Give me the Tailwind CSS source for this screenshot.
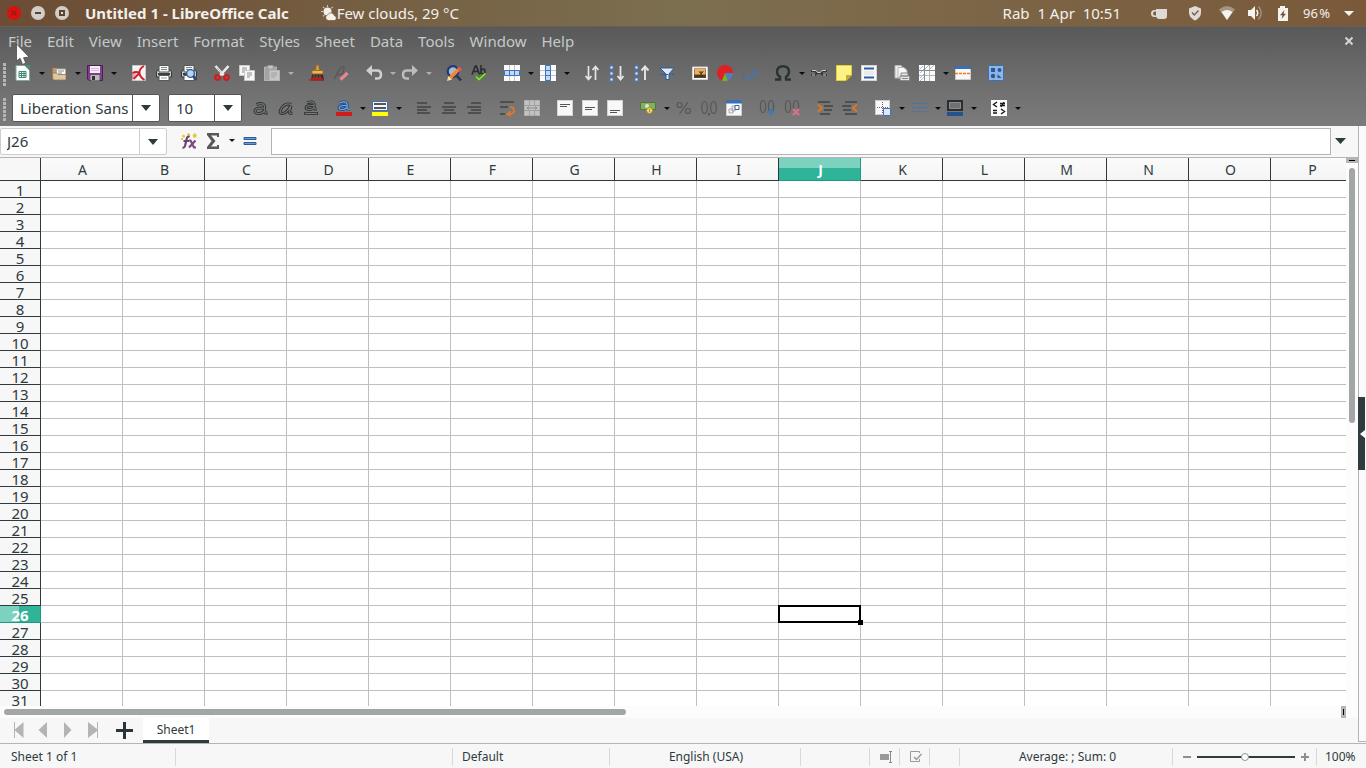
<!DOCTYPE html>
<html lang="en">
<head>
<meta charset="utf-8">
<title>Untitled 1 - LibreOffice Calc</title>
<script src="https://cdn.jsdelivr.net/npm/@tailwindcss/browser@4"></script>
</head>
<body class="flex h-screen flex-col overflow-hidden bg-[#f7f7f7] font-['Noto_Sans',sans-serif] text-[15px] text-[#2e3a3d]">

<header class="flex h-[27px] shrink-0 items-center justify-between border-b border-[#6a5f52] bg-linear-to-r from-[#6c4c34] via-[#7c6f50] to-[#7a593a] text-[#f3f0ec]">
  <div class="flex items-center">
    <div class="flex gap-2.5 pl-[7px]">
      <button aria-label="Close window" class="flex size-3.5"><svg class="size-3.5" viewBox="0 0 14 14"><circle cx="7" cy="7" r="7" fill="#d8120f"/><path d="M4.500 4.500l5 5M9.500 4.500l-5 5" stroke="#a01813" stroke-width="1.600"/></svg></button>
      <button aria-label="Minimize window" class="flex size-3.5"><svg class="size-3.5" viewBox="0 0 14 14"><circle cx="7" cy="7" r="7" fill="#d3cdc7"/><path d="M4 7h6" stroke="#5b4433" stroke-width="2"/></svg></button>
      <button aria-label="Restore window" class="flex size-3.5"><svg class="size-3.5" viewBox="0 0 14 14"><circle cx="7" cy="7" r="7" fill="#d3cdc7"/><rect x="4" y="4" width="6" height="6" fill="#5b4433"/><rect x="6" y="6" width="2" height="2" fill="#e8e4df"/></svg></button>
    </div>
    <h1 class="pl-4 text-[15px] leading-5 font-bold">Untitled 1 - LibreOffice Calc</h1>
    <div class="flex items-center pl-8">
      <svg class="size-4" viewBox="0 0 16 16" fill="#f3f0ec"><circle cx="6.500" cy="6.500" r="4"/><path d="M6 0h1v2H6zM0 6h2v1H0zM1.500 2.200l.8-.8 1.400 1.400-.8.8zM10 3l1.500-1.500.8.8L10.800 3.800zM1.500 11l1.500-1.500.8.8-1.500 1.500z" opacity=".7"/><path d="M7.500 15.500a3 3 0 01-.6-5.900 3.600 3.600 0 016.600 1.200 2.400 2.400 0 01-.1 4.700z" stroke="#7a573c" stroke-width=".7"/></svg>
      <span class="leading-5">Few clouds, 29 °C</span>
    </div>
  </div>
  <div class="flex items-center">
    <time class="pr-[30px] leading-5 whitespace-pre">Rab  1 Apr  10:51</time>
    <svg class="mr-5 h-4 w-4" viewBox="0 0 16 16"><path d="M5 4h11v7q0 3-3 3H8q-2 0-2.700-2H3.500Q0 12 0 8.500T3.500 5H5zM5 6.500H4q-2 0-2 2t2 2h1z" fill="#dedad5" fill-rule="evenodd"/></svg>
    <svg class="mr-4 h-4 w-4" viewBox="0 0 16 16"><path d="M8 1l6 2.500v4C14 11.500 11 14 8 15.500 5 14 2 11.500 2 7.500v-4z" fill="#dedad5"/><path d="M5 7.500L7.300 10 11.500 5.500" fill="none" stroke="#765c42" stroke-width="1.300"/></svg>
    <svg class="mr-3 h-4 w-4" viewBox="0 0 16 16"><path d="M0 4.500Q8-2.500 16 4.500L8 15z" fill="#a79480"/><path d="M2.500 7Q8 3 13.500 7L8 15z" fill="#f5f3f0"/></svg>
    <svg class="mr-3 h-4 w-4" viewBox="0 0 16 16"><path d="M1 5h3l4-4v14l-4-4H1z" fill="#f5f3f0"/><path d="M9.500 5q2.500 3 0 6" fill="none" stroke="#f5f3f0" stroke-width="1.500"/><path d="M11.500 1.500q5.500 6.500 0 13" fill="none" stroke="#a79480" stroke-width="1.300"/></svg>
    <svg class="mr-3 h-4 w-4" viewBox="0 0 16 16"><path d="M5 1h5v2h3v13H3V3h2z" fill="#f5f3f0"/><path d="M9.500 5L5 10.300h2.500L6.500 14 11 8.700H8.500z" fill="#6f4f33"/></svg>
    <span class="pr-3.5 text-[13px] leading-5">96&#8202;%</span>
    <svg class="mr-3 h-4 w-2.5" viewBox="0 0 10 16"><path d="M0 6h10l-5 5z" fill="#f5f3f0"/></svg>
  </div>
</header>

<section class="shrink-0 bg-linear-to-b from-[#595959] via-[#6c6c6c] to-[#7b7b7b]">
  <nav aria-label="Menu bar" class="flex h-[29px] items-start justify-between pt-1 text-[#c4cac9]">
    <div class="flex gap-[15px] pl-2 leading-5">
      <a href="#">File</a><a href="#">Edit</a><a href="#">View</a><a href="#">Insert</a><a href="#">Format</a><a href="#">Styles</a><a href="#">Sheet</a><a href="#">Data</a><a href="#">Tools</a><a href="#">Window</a><a href="#">Help</a>
    </div>
    <button aria-label="Close document" class="mt-[5px] mr-3"><svg class="size-2.5" viewBox="0 0 10 10"><path d="M1.500 1.500l7 7M8.500 1.500l-7 7" stroke="#d0d6d5" stroke-width="2"/></svg></button>
  </nav>
  <div role="toolbar" aria-label="Standard" class="flex h-[35px] items-start overflow-hidden">
    <svg class="mt-[7px] mr-1 h-6 w-[7px] shrink-0" viewBox="0 0 7 24"><path d="M4.500 0v24" stroke="#b6b6b6" stroke-width="3" stroke-dasharray="3 1"/></svg>
    <div id="standard" class="flex items-start"></div>
  </div>
  <div role="toolbar" aria-label="Formatting" class="flex h-[35px] items-start overflow-hidden">
    <svg class="mt-[7px] mr-[5px] h-6 w-[7px] shrink-0" viewBox="0 0 7 24"><path d="M4.500 0v24" stroke="#b6b6b6" stroke-width="3" stroke-dasharray="3 1"/></svg>
    <div class="mt-[3px] flex h-7 w-[148px] shrink-0 rounded-xs border border-[#555] bg-white">
      <input aria-label="Font name" value="Liberation Sans" class="w-[119px] min-w-0 pl-[7px] outline-none">
      <button aria-label="Choose font" class="flex flex-1 items-center justify-center border-l border-[#555]"><svg class="h-1.5 w-2.5" viewBox="0 0 10 6"><path d="M0 0h10L5 6z" fill="#2e3a3d"/></svg></button>
    </div>
    <div class="mt-[3px] mr-[7px] ml-2 flex h-7 w-[74px] shrink-0 rounded-xs border border-[#555] bg-white">
      <input aria-label="Font size" value="10" class="w-[45px] min-w-0 pl-[7px] outline-none">
      <button aria-label="Choose font size" class="flex flex-1 items-center justify-center border-l border-[#555]"><svg class="h-1.5 w-2.5" viewBox="0 0 10 6"><path d="M0 0h10L5 6z" fill="#2e3a3d"/></svg></button>
    </div>
    <div id="formatting" class="flex items-start"></div>
  </div>
</section>

<main class="flex min-h-0 flex-1">
  <div class="flex min-w-0 flex-1 flex-col">
    <div class="flex h-8 shrink-0 items-start border-b border-[#b4b4b4] bg-[#f7f7f7] pt-0.5">
      <div class="flex h-[27px] w-[167px] shrink-0 rounded-xs border border-[#cdcdcd] bg-white">
        <input aria-label="Name box" value="J26" class="w-[138px] min-w-0 pl-1.5 outline-none">
        <button aria-label="Name list" class="flex flex-1 items-center justify-center border-l border-[#cdcdcd]"><svg class="h-1.5 w-2.5" viewBox="0 0 10 6"><path d="M0 0h10L5 6z" fill="#2e3a3d"/></svg></button>
      </div>
      <button aria-label="Function wizard" class="mt-[5px] ml-3.5"><svg class="size-4" viewBox="0 0 16 16"><path d="M1 3l1.500-1L4 3 3 4.500zM6 1.500L7.500.5 9 1.500l-1 2zM12 2l1.800-1.500L15.500 2l-1 2.300h-2zM0 6l1-1 1 1-1 1z" fill="#e8cf2a" stroke="#cdb520" stroke-width=".5"/><path d="M8.500 4q-2-1-2.700 1.500L4 13q-.7 2-2.500 1.500M2.500 8h5.500" fill="none" stroke="#6d4371" stroke-width="2.200"/><path d="M8 7.500h1.500l3.500 7h2M14.500 7.500L8 14.500" fill="none" stroke="#7d4a80" stroke-width="2.200"/></svg></button>
      <button aria-label="Sum" class="mt-[5px] ml-[9px]"><svg class="h-4 w-3.5" viewBox="0 0 14 16"><path d="M1 0h12v4h-2V2.500H5L9.500 8 5 13.500h6V12h2v4H1v-2l4.500-6L1 2z" fill="#555959"/></svg></button>
      <button aria-label="Sum options" class="mt-[11px] ml-[9px]"><svg class="h-[3px] w-1.5" viewBox="0 0 6 3"><path d="M0 0h6L3 3z" fill="#1a1a1a"/></svg></button>
      <button aria-label="Formula" class="mt-[5px] ml-2"><svg class="h-4 w-3.5" viewBox="0 0 14 16"><path d="M1 4.500h12v2H1zM1 9.500h12v2H1z" fill="#6f9bd2" stroke="#2c5c9f"/></svg></button>
      <input aria-label="Input line" class="ml-3.5 h-[27px] min-w-0 flex-1 border border-[#b4b4b4] bg-white px-1.5 outline-none">
      <button aria-label="Expand formula bar" class="mt-2.5 mr-3 ml-1"><svg class="h-1.5 w-[11px]" viewBox="0 0 11 6"><path d="M0 0h11L5.500 6z" fill="#2e3a3d"/></svg></button>
    </div>

    <div class="flex min-h-0 flex-1">
      <div class="min-w-0 flex-1 overflow-hidden bg-white">
        <table class="w-[1353px] table-fixed border-separate border-spacing-0" aria-label="Sheet1">
          <colgroup id="cols"><col class="w-[41px]"></colgroup>
          <thead><tr id="head"><th class="h-[23px] border-r border-b border-[#2e3a3d] bg-[#f7f7f7] p-0"></th></tr></thead>
          <tbody id="rows"></tbody>
        </table>
      </div>
      <div class="flex w-3 shrink-0 flex-col items-center bg-[#fcfcfc]">
        <div class="flex h-[5px] w-full items-center justify-center bg-[#b4b4b4]"><div class="h-px w-1.5 bg-black"></div></div>
        <div class="mt-[5px] h-[255px] w-1.5 rounded-full bg-[#a2a6a6]"></div>
      </div>
    </div>

    <div class="flex h-3 shrink-0 items-center justify-between bg-[#fcfcfc] pr-3 pl-1">
      <div class="h-1.5 w-[622px] rounded-full bg-[#a2a6a4]"></div>
      <div class="flex h-3 w-[5px] items-center justify-center bg-[#b4b4b4]"><div class="h-1.5 w-px bg-black"></div></div>
    </div>

    <div class="flex h-[25px] shrink-0 items-start bg-[#f7f7f7] pl-3.5">
      <button aria-label="First sheet" class="mt-1"><svg class="h-4 w-2.5" viewBox="0 0 10 16"><path d="M0 0h1v7.500L9.500 0v16L1 8.500V16H0z" fill="#b4b4b4"/></svg></button>
      <button aria-label="Previous sheet" class="mt-1 ml-3.5"><svg class="h-4 w-2.5" viewBox="0 0 10 16"><path d="M9 0v16L.5 8z" fill="#b4b4b4"/></svg></button>
      <button aria-label="Next sheet" class="mt-1 ml-3.5"><svg class="h-4 w-2.5" viewBox="0 0 10 16"><path d="M2 0v16L9.500 8z" fill="#b4b4b4"/></svg></button>
      <button aria-label="Last sheet" class="mt-1 ml-4"><svg class="h-4 w-2.5" viewBox="0 0 10 16"><path d="M10 0H9v7L0 0v16l9-7v7h1z" fill="#b4b4b4"/></svg></button>
      <button aria-label="Add sheet" class="mt-1 ml-[18px]"><svg class="size-[17px]" viewBox="0 0 17 17"><path d="M7 0h3v7h7v3h-7v7H7v-7H0V7h7z" fill="#2a3538"/></svg></button>
      <button class="ml-2.5 h-[25px] w-[66px] border-b-3 border-[#2e3a3d] bg-white pt-0.5 text-[12px] leading-[18px]">Sheet1</button>
    </div>
  </div>
  <aside aria-label="Sidebar" class="mb-px flex w-2 shrink-0 items-center border-b border-l border-[#b4b4b4] bg-[#fafafa]">
    <button aria-label="Show sidebar" class="-ml-px flex h-[73px] w-[7px] items-center justify-end bg-[#2e3c40]"><svg class="h-2 w-[5px]" viewBox="0 0 5 8"><path d="M5 0v8L0 4z" fill="#fff"/></svg></button>
  </aside>
</main>

<footer class="flex h-[25px] shrink-0 items-center border-t border-[#b4b4b4] bg-[#f7f7f7] pt-px text-[12px] leading-[18px]">
  <div class="w-[176px] border-r border-[#d9d9d9] pl-[11px]">Sheet 1 of 1</div>
  <div class="h-[18px] w-[277px] border-r border-[#d9d9d9]"></div>
  <div class="w-[157px] border-r border-[#d9d9d9] pl-[9px]">Default</div>
  <div class="flex-1 border-r border-[#d9d9d9] pl-0.5 text-center">English (USA)</div>
  <div class="h-[18px] w-[69px] border-r border-[#d9d9d9]"></div>
  <div class="flex h-[18px] w-[30px] items-center justify-center border-r border-[#d9d9d9] pl-0.5"><svg class="h-3 w-3.5" viewBox="0 0 14 12"><path d="M1 3h9v6H1z" fill="#9a9a9a"/><path d="M10 .5h3M10 11.500h3M11.500 1v10" stroke="#8a8a8a"/></svg></div>
  <div class="flex h-[18px] w-[30px] items-center justify-center border-r border-[#d9d9d9] pl-0.5"><svg class="h-3.5 w-3" viewBox="0 0 12 14"><path d="M9.500 3V1.500h-9v10h9V9" fill="none" stroke="#9a9a9a"/><path d="M4 7l2.500 2.500L11.500 4" fill="none" stroke="#9a9a9a" stroke-width="1.500"/></svg></div>
  <div class="h-[18px] w-[30px] border-r border-[#d9d9d9]"></div>
  <div class="w-[213px] border-r border-[#d9d9d9] pl-[3px] text-center">Average: ; Sum: 0</div>
  <div class="flex h-[18px] w-[144px] items-center justify-center gap-1.5 border-r border-[#d9d9d9] pl-0.5">
    <button aria-label="Zoom out"><svg class="h-2 w-2" viewBox="0 0 8 8"><path d="M0 4h8" stroke="#8e8e8e" stroke-width="2"/></svg></button>
    <div class="relative flex h-2 w-[98px] items-center">
      <div class="h-0.5 w-full bg-[#2e3c40]"></div>
      <div class="absolute left-[44px] size-2 rounded-full border border-[#8e9494] bg-white"></div>
      <input type="range" aria-label="Zoom" min="20" max="180" value="100" class="absolute inset-0 w-full opacity-0">
    </div>
    <button aria-label="Zoom in"><svg class="h-2 w-2" viewBox="0 0 8 8"><path d="M0 4h8M4 0v8" stroke="#8e8e8e" stroke-width="2"/></svg></button>
  </div>
  <div class="w-[49px] pl-2">100%</div>
</footer>

<!-- Mouse pointer -->
<svg class="pointer-events-none absolute top-[43px] left-[15px] h-[23px] w-[15px]" viewBox="0 0 15 23"><path d="M1.500 1v17l3.700-2.700L7.500 21.500l3.200-1.500-2.200-5.300 5.500-.7z" fill="#fff" stroke="#4d4d4d" stroke-width=".8"/></svg>

<script>
const blockA = 'M3.500 4.500Q10.500 2 11.500 6l.2 6q.3 1.500 3 1M11.500 8.200Q2.500 7.500 2 10.800q.3 3.200 4.500 2.700 3.500-.5 5-2.700';
const slantA = 'M13 4.500Q8 2.500 4 7.500 0 13.500 4.500 13.500q4 0 8.500-8l-1.700 6.500q0 2 3.200 1';
const smallA = 'M4 2.800Q10 .5 11 4l.2 4q.3 1.500 2.500 1M11 5.600Q3.500 5 3 7.500q.3 2.500 4 2 2.500-.4 4-2';
const carved = (d, dark, light) => `<path d="${d}" fill="none" stroke="${dark}" stroke-width="3"/><path d="${d}" fill="none" stroke="${light}" stroke-width="1.200"/>`;
const lines = (s) => `<path d="${s}" stroke="#333733" stroke-width="2"/><path d="${s}" stroke="#8b8e88" stroke-width=".6"/>`;
const sheet = '<rect x=".5" y=".5" width="15" height="15" fill="#f8f8f8" stroke="#d3d3d3"/>';
const tableGrid = '<rect width="16" height="16" fill="#bfc4c9"/><path d="M0 0h5v5H0zM6 0h4v5H6zM11 0h5v5h-5zM0 6h5v4H0zM6 6h4v4H6zM11 6h5v4h-5zM0 11h5v5H0zM6 11h4v5H6zM11 11h5v5h-5z" fill="#fafafa"/>';
const printer = '<path d="M1.500 5h13l1 2v5H.5V7z" fill="#c8cac6" stroke="#33373a"/><path d="M3 .5h10V7H3z" fill="#f6f6f6" stroke="#55595b"/><path d="M5 2.500h6M5 4.500h6" stroke="#888"/><path d="M2 8h12v2H2z" fill="#3c4043"/><path d="M3 10.500h10v5H3z" fill="#fff" stroke="#55595b"/>';
const icons = {
  new: '<path d="M1 .5h9.500L14.500 5v10.500H1z" fill="#fff" stroke="#7fa99a"/><path d="M9 0h6v6z" fill="#4d8b75"/><path d="M4 6.500h7v6H4zM4 8.500h7M4 10.500h7M6.500 6.500v6M9 6.500v6" fill="none" stroke="#3f8a6d"/>',
  open: '<path d="M1 2.500h5l1 1.500h8v10.500H1z" fill="#b99a6b" stroke="#7b6543"/><path d="M5.500 4h9v6h-9z" fill="#fff" stroke="#aaa"/><path d="M7 6h6M7 8h4" stroke="#888"/><path d="M1.500 8h4l1.500 1.500h8V15h-13z" fill="#dfc79f" stroke="#8c7550" stroke-width=".8"/>',
  save: '<path d="M.5.500h15v15H2L.5 14z" fill="#7c3f88" stroke="#4c1d58"/><rect x="3" y="1" width="10" height="7" fill="#f4eef5"/><path d="M4 3.500h8M4 5.500h8" stroke="#c9bccb"/><rect x="3.500" y="10" width="9" height="5.500" fill="#b9bdb8"/><rect x="5" y="11" width="3" height="4" fill="#333"/>',
  pdf: '<path d="M1.500.500h13v15h-13z" fill="#f4f4f4" stroke="#c9c9c9"/><path d="M13 1Q8 3.500 8.500 8.500q.5 3.500 5 6.500M8.500 8L2.500 14M8.500 8Q5 6 1.500 8" fill="none" stroke="#cf1f29" stroke-width="1.900"/><path d="M1 8l5-1-4 7H1z" fill="#cf1f29" opacity=".35"/>',
  print: printer + '<path d="M5 13h6" stroke="#999"/><path d="M12 11h2v1h-2z" fill="#63c34a"/>',
  preview: printer + '<circle cx="9.500" cy="8.500" r="3.800" fill="#b9d4f1" stroke="#2d5f9f" stroke-width="1.300"/><path d="M12 11l3.500 4" stroke="#29486f" stroke-width="2.200"/>',
  cut: '<path d="M1.500 1l8.500 9.500M14.500 1L6 10.500" stroke="#eceeed" stroke-width="2.600"/><path d="M3 2.500l4 5" stroke="#9a9e9c" stroke-width=".8"/><circle cx="3.500" cy="12.500" r="2.300" fill="#8b5a5a" stroke="#d01c1c" stroke-width="2.200"/><circle cx="12.500" cy="12.500" r="2.300" fill="#8b5a5a" stroke="#d01c1c" stroke-width="2.200"/>',
  copy: '<path d="M.5.500h10v10H.5z" fill="#f7f7f7" stroke="#c9c9c9"/><path d="M3 3h5M3 5h5M3 7h3" stroke="#8d8d8d"/><path d="M5.500 5.500h10v10h-10z" fill="#f7f7f7" stroke="#c9c9c9"/><path d="M8 8h5M8 10h5M8 12h3" stroke="#8d8d8d"/>',
  paste: '<path d="M.5 2h12v13.500H.5z" fill="#a4a4a4" stroke="#b4b4b4"/><path d="M4 .5h5V4H4z" fill="#c8c8c8" stroke="#a0a0a0"/><path d="M5.500 5.500h10v10h-10z" fill="#c6c6c6" stroke="#b4b4b4"/><path d="M7 8h6M7 10h6M7 12h4" stroke="#a0a0a0"/>',
  clone: '<path d="M8.500 0h2l1 6H7.500z" fill="#e5a03c" stroke="#9a6a22" stroke-width=".7"/><path d="M4 5.500h11V9H4z" fill="#f0b458" stroke="#9f6d25"/><path d="M4 9.500h11l1 6H3z" fill="#352b26"/><path d="M6 10v4M9 10v4M12 10v4" stroke="#77665c"/><path d="M0 15.500q0-1.500 2.500-1.500 1.500 0 1.500-1.500h10l1 1.500v1.500z" fill="#c61d19" opacity=".85"/>',
  clear: '<path d="M1 14L8 2h3l-2 12M4 9.500h6" fill="none" stroke="#5b5b5b" stroke-width="1.600"/><path d="M7.500 14.500L14.500 8" stroke="#e88699" stroke-width="3.200"/>',
  undo: '<path d="M4.500 5.500H11q4 0 4 4.200 0 3.800-4 3.800H9" fill="none" stroke="#cfcfcf" stroke-width="2.500"/><path d="M6 0v11L0 5.500z" fill="#cfcfcf"/>',
  redo: '<path d="M11.500 5.500H5q-4 0-4 4.200 0 3.800 4 3.800h2" fill="none" stroke="#bcbcbc" stroke-width="2.500"/><path d="M10 0v11l6-5.500z" fill="#bcbcbc"/>',
  find: '<circle cx="7" cy="6.500" r="5.300" fill="#a9b9d2" stroke="#1e3c74" stroke-width="2.200"/><path d="M11 11l4 4.500" stroke="#263550" stroke-width="2.600"/><path d="M3.500 13.500L13 4" stroke="#f1862a" stroke-width="3.600"/><path d="M1 16l1.300-5 3.700 3.500z" fill="#f5d8a7"/><path d="M12 2.500l3 3" stroke="#e45555" stroke-width="3"/>',
  spell: '<path d="M1 9.500L4.300 1h1L8.500 9.500M2.200 6.500h5M10 0v9M10.500 5q3-2.500 3.500 1t-3.500 2.500" fill="none" stroke="#272d2d" stroke-width="1.600"/><path d="M5 11.500l3 3 6.500-6" fill="none" stroke="#479517" stroke-width="3"/><path d="M5 11.500l3 3 6.500-6" fill="none" stroke="#91df48" stroke-width="1.400"/>',
  row: tableGrid + '<path d="M.5 5.500h15v5H.5zM5.500 5.500v5M10.500 5.500v5" fill="#c3d8f2" stroke="#3f74b8"/>',
  column: tableGrid + '<path d="M5.500.500h5v15h-5zM5.500 5.500h5M5.500 10.500h5" fill="#c3d8f2" stroke="#3f74b8"/>',
  sort: '<path d="M4.500 1v13M1.500 11l3 3.500 3-3.500M11.500 15V2M8.500 5l3-3.500 3 3.500" fill="none" stroke="#e6e6e6" stroke-width="1.700"/>',
  asc: '<path d="M1 1h3v3H1zM1 7h3v3H1zM1 13h3v3H1z" fill="#eaf2ff" stroke="#4a7fc4"/><path d="M11.500 1v13M8.500 11l3 3.500 3-3.500" fill="none" stroke="#e6e6e6" stroke-width="1.800"/>',
  desc: '<path d="M1 1h3v3H1zM1 7h3v3H1zM1 13h3v3H1z" fill="#eaf2ff" stroke="#4a7fc4"/><path d="M11 15V2M7.500 5.500L11 1.500l3.500 4" fill="none" stroke="#e6e6e6" stroke-width="1.900"/>',
  filter: '<path d="M1 3h14L10 9v5.500H7V9z" fill="#dfeaf8" stroke="#265e9f"/><path d="M1 9.500h14" stroke="#265e9f" stroke-dasharray="2 1"/>',
  image: '<path d="M.5 2h15v12.500H.5z" fill="#fff" stroke="#d5d5d5"/><path d="M2 3.500h12v9.500H2z" fill="#5a4930"/><path d="M2.500 4h11v5.500h-11z" fill="#efb05a"/><path d="M9 6v6M7 6.500l2 2 2.500-2M3 11h10" stroke="#35281b" fill="none"/>',
  chart: '<circle cx="8" cy="8" r="8" fill="#df2027"/><path d="M8 8h8a8 8 0 01-5 7.400z" fill="#4b80c5"/><path d="M8 8l3 7.400a8 8 0 01-6 0z" fill="#68b82c"/>',
  pivot: '<g opacity=".75"><path d="M0 1h3v3H0zM5 1h3v3H5zM10 1h4v3h-4zM0 6h3v3H0zM0 11h3v4H0z" fill="#626a70"/><path d="M4 13h5q4-1 4-7M6.500 10l-3 3 3 3M10 8.500l3-3 3 3" fill="none" stroke="#3f78bd" stroke-width="1.500"/></g>',
  omega: '<path d="M0 14.500h5V12Q2 10 2 6.500 2.500 1.200 8 1.200t6 5.300Q14 10 11 12v2.500h5" fill="none" stroke="#2a3234" stroke-width="2.400"/>',
  link: '<path d="M0 6h4l2 2h4l2-2h4M0 10h4l2-2M16 10h-4l-2-2" fill="none" stroke="#34383a" stroke-width="1.800"/><path d="M1 5.500h4l1.500 2h3l1.500-2h4M1 10h3M12 10h3" fill="none" stroke="#cdcdcd"/>',
  note: '<path d="M.5.500h15V10l-5.500 5.500H.5z" fill="#fdf287" stroke="#e5cf2f"/><path d="M10 15.500V10h5.500z" fill="#c8ad19"/>',
  header: sheet + '<path d="M3 2.500h10v2H3zM3 11.500h10v2H3z" fill="#2b5fa6"/><path d="M3 7h10M3 9h10" stroke="#ddd"/>',
  area: '<path d="M1 .5h6L10 4v9H1z" fill="#ededed" stroke="#b5b5b5"/><path d="M4 2.500h6l3 3V13H4z" fill="#f8f8f8" stroke="#b5b5b5"/><path d="M7 8h7v3H7zM6 11h9.500v4.500H6z" fill="#e8e8e8" stroke="#888"/><path d="M8 13.500h6" stroke="#888"/>',
  freeze: '<rect width="16" height="16" fill="#fafafa"/><path d="M1 4l3-3M1 8l4-4M6 4l4-4M11 4l4-4M1 13l4-4M1 16l4-4" stroke="#9dbbe0"/><path d="M5.500 0v16M0 5.500h16M10.500 0v16M0 10.500h16" stroke="#b5b5b5"/><path d="M5.500 0v16M0 5.500h16" stroke="#8a8a8a"/>',
  split: '<path d="M.5 1.500h15v13H.5z" fill="#f8f8f8" stroke="#ccc"/><path d="M0 1h16v3H0z" fill="#3a6fb4"/><path d="M0 8.500h16" stroke="#f07a17" stroke-width="1.300" stroke-dasharray="3 1"/>',
  draw: '<rect x=".5" y=".5" width="15" height="15" rx="1" fill="#8fb5e4" stroke="#3a6fb4"/><path d="M3 3h4v4H3z" fill="#2a5a9c"/><circle cx="11.500" cy="5" r="2" fill="#2a5a9c"/><circle cx="5" cy="11" r="2.200" fill="#2a5a9c"/><path d="M9.500 9l4 4h-4z" fill="#2a5a9c"/>',
  bold: carved(blockA, '#2d3232', '#737675'),
  italic: carved(slantA, '#2d3232', '#737675'),
  underline: carved(smallA, '#2d3232', '#737675') + '<path d="M1 13.500h14" stroke="#2d3232" stroke-width="2.600"/><path d="M2 13.500h12" stroke="#777"/>',
  color: carved(smallA, '#1f4d8f', '#7aa6dc') + '<path d="M0 12h16v4H0z" fill="#cf1c18"/>',
  highlight: '<path d="M.5 1.500h15v9H.5z" fill="#f4f8fd" stroke="#3a71b6"/><path d="M2 4h12M2 8h12" stroke="#222" stroke-width="1.600"/><path d="M0 12h16v4H0z" fill="#ffff00"/>',
  left: lines('M1 3h10M1 7h14M1 10h10M1 13h13'), center: lines('M3 3h10M1 7h14M3 10h10M1 13h14'), right: lines('M5 3h10M1 7h14M5 10h10M2 13h13'),
  wrap: lines('M1 2h14M1 7h8M1 14h5') + '<path d="M11 7q4 0 4 3.500T10 14M11.500 11L8.500 14l3 2" fill="none" stroke="#e5782b" stroke-width="1.700"/>',
  merge: '<rect x=".5" y=".5" width="15" height="15" fill="#c2c2c2" stroke="#b0b0b0"/><path d="M0 5.500h16M0 10.500h16M5.500 0v5M10.500 0v5M5.500 11v5M10.500 11v5" stroke="#a0a0a0"/><path d="M3 8h10M5 6.500L3 8l2 1.500M11 6.500L13 8l-2 1.500" fill="none" stroke="#8c8c8c"/>',
  top: sheet + '<path d="M3 4.500h10M3 6.500h7" stroke="#555"/>', middle: sheet + '<path d="M3 7.500h10M3 9.500h7" stroke="#555"/>', bottom: sheet + '<path d="M3 10.500h10M3 12.500h7" stroke="#555"/>',
  currency: '<path d="M.5 2.500h15v7H.5z" fill="#84ad63" stroke="#4f7a34"/><circle cx="7" cy="6" r="2" fill="#d8e8ca"/><circle cx="9.500" cy="10.500" r="3" fill="#f2dc75" stroke="#a78725"/><path d="M9.500 9v3" stroke="#a78725"/>',
  percent: '<g fill="none" stroke="#535656" stroke-width="1.200"><circle cx="3.500" cy="5" r="2.500"/><circle cx="12" cy="11" r="2.500"/><path d="M12 2L3.500 14"/></g>',
  number: '<g fill="none" stroke="#555858" stroke-width="1.200"><ellipse cx="3.500" cy="7.500" rx="2.800" ry="6"/><ellipse cx="12.500" cy="7.500" rx="2.800" ry="6"/><path d="M8 13v2.500" stroke-width="2"/></g>',
  date: '<path d="M.5 1.500h15v14H.5z" fill="#f8f8f8" stroke="#ccc"/><path d="M0 0h16v3.500H0z" fill="#3a6fb4"/><path d="M3 9h4v4H3zM6 6h3v5H6z" fill="#eee" stroke="#aaa"/><path d="M9 5.500h4v4H9z" fill="#fff" stroke="#3566a8"/>',
  addDec: '<g fill="none" stroke="#555858" stroke-width="1.200"><ellipse cx="4" cy="6.500" rx="2.600" ry="6"/><ellipse cx="12" cy="6.500" rx="2.600" ry="6"/></g><path d="M12 8v8M8 12h8" stroke="#4379b8" stroke-width="2"/>',
  delDec: '<g fill="none" stroke="#555858" stroke-width="1.200"><ellipse cx="4" cy="6.500" rx="2.600" ry="6"/><ellipse cx="12" cy="6.500" rx="2.600" ry="6"/></g><path d="M9 9l6 6M15 9l-6 6" stroke="#dc7185" stroke-width="2.300"/>',
  indent: lines('M1 2h12M7 6h9M7 10h8M3 14h10') + '<path d="M1 4.500L5 8l-4 3.500" fill="none" stroke="#e9741f" stroke-width="1.800"/>',
  outdent: lines('M3 2h12M0 6h9M1 10h8M3 14h12') + '<path d="M15 4.500L11 8l4 3.500" fill="none" stroke="#e9741f" stroke-width="1.800"/>',
  border: '<rect x=".5" y=".5" width="14" height="14" fill="#f8f8f8" stroke="#ccc"/><path d="M2 7.500h11M7.500 2v11" stroke="#666" stroke-dasharray="1 1"/><path d="M8.500 8.500h7v7h-7z" fill="#dde9f8" stroke="#3f74b8"/>',
  style: '<path d="M0 3.500h16" stroke="#4374ac"/><path d="M1 7.500h16" stroke="#4374ac" stroke-dasharray="4 2"/><path d="M1 11.500h16" stroke="#4374ac" stroke-dasharray="2 1"/>',
  lineColor: '<path d="M0 0h16v11H0z" fill="#2b2e30"/><path d="M2.500 2.500h11v6h-11z" fill="#6f7171" stroke="#8b8e8e"/><path d="M0 12h16v4H0z" fill="#24528f"/>',
  cond: '<rect width="16" height="16" fill="#fdfdfd"/><path d="M6 2L2.500 4.500 6 7M9 3.500h5M9 5.500h5M13 2l-3 5M2 10.500h4M2 13h4M10 9l3.500 2.500L10 14" fill="none" stroke="#161616" stroke-width="1.400"/>'
};
const buttonClass = 'flex h-[34px] w-[25px] shrink-0 items-center pl-1';
const arrowClass = 'flex h-[34px] w-[11px] shrink-0 items-center justify-center';

// "+" after a name adds a drop-down arrow, "~" a disabled arrow, "|" starts a new group.
function fill(id, list) {
  document.getElementById(id).innerHTML = list.split(' ').map(item => {
    if (item === '|') return '<span class="w-2 shrink-0"></span>';
    const name = item.replace(/[+~]/, '');
    let html = `<button aria-label="${name}" class="${buttonClass}"><svg class="size-4 overflow-visible" viewBox="0 0 16 16">${icons[name]}</svg></button>`;
    if (item !== name) html += `<button aria-label="${name} options" class="${arrowClass}"><svg class="h-[3px] w-1.5" viewBox="0 0 6 3"><path d="M0 0h6L3 3z" fill="${item.endsWith('~') ? '#b0b0b0' : '#0c0c0c'}"/></svg></button>`;
    return html;
  }).join('');
}
fill('standard', 'new+ open+ save+ | pdf print preview | cut copy paste~ | clone clear | undo~ redo~ | find spell | row+ column+ | sort asc desc filter | image chart pivot | omega+ link note header | area freeze+ split | draw');
fill('formatting', 'bold italic underline | color+ highlight+ | left center right | wrap merge | top middle bottom | currency+ percent number date | addDec delDec | indent outdent | border+ style+ lineColor+ | cond+');

const letters = 'ABCDEFGHIJKLMNOP'.split('');
document.getElementById('cols').insertAdjacentHTML('beforeend', letters.map(() => '<col class="w-[82px]">').join(''));
document.getElementById('head').insertAdjacentHTML('beforeend', letters.map(c => c === 'J'
  ? '<th class="h-[23px] border-r border-b border-[#1f9a80] bg-linear-to-b from-[#7dd1bf] from-45% to-[#2fb49a] to-45% p-0 pt-0.5 pl-0.5 text-[14px] leading-5 font-bold text-white">J</th>'
  : `<th class="h-[23px] border-r border-b border-[#2e3a3d] bg-linear-to-b from-[#fbfbfb] to-[#f4f4f4] p-0 pt-0.5 pl-0.5 text-[14px] leading-5 font-normal">${c}</th>`).join(''));
let body = '';
for (let r = 1; r <= 31; r++) {
  body += '<tr>' + (r === 26
    ? '<th class="h-[17px] border-r border-b border-[#1f9a80] bg-linear-to-r from-[#7dd1bf] from-48% to-[#2fb49a] to-48% p-0 text-[15px] leading-4 font-bold text-white"><div class="h-4 pt-px">26</div></th>'
    : `<th class="h-[17px] border-r border-b border-[#2e3a3d] bg-[#f7f7f7] p-0 text-[15px] leading-4 font-normal"><div class="h-4 pt-px">${r}</div></th>`);
  body += letters.map(c => c === 'J' && r === 26
    ? '<td class="relative border-r border-b border-[#bfbfbf] p-0"><div class="absolute -inset-px border-2 border-black"><div class="absolute -right-1 -bottom-1 size-[5px] bg-black"></div></div></td>'
    : '<td class="border-r border-b border-[#bfbfbf] p-0"></td>').join('') + '</tr>';
}
document.getElementById('rows').innerHTML = body;
</script>
</body>
</html>
